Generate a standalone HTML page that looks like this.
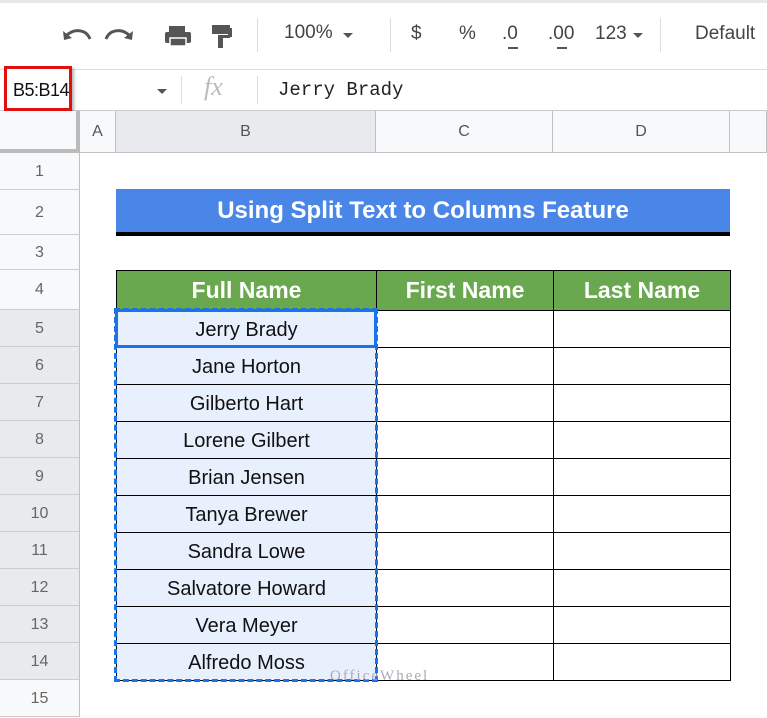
<!DOCTYPE html>
<html><head><style>
*{margin:0;padding:0;box-sizing:border-box}
body{width:767px;height:718px;background:#fff;position:relative;overflow:hidden;font-family:"Liberation Sans",Arial,sans-serif}
.a{position:absolute}
.tb{color:#444;font-size:19px}
.rh{position:absolute;left:0;width:80px;background:#f8f9fa;border-bottom:1px solid #ccc;border-right:1px solid #c0c0c0;color:#666;font-size:16px;text-align:center}
.ch{position:absolute;top:111px;height:42px;background:#f8f9fa;border-right:1px solid #c0c0c0;border-bottom:1px solid #c0c0c0;color:#555;font-size:16px;text-align:center;line-height:42px}
.cell{position:absolute;border:1px solid #000;font-size:20px;text-align:center;color:#111}
</style></head><body>
<div class="a" style="left:0;top:0;width:767px;height:3px;background:#e8e8e8"></div>
<svg class="a" style="left:60px;top:22px" width="180" height="28" viewBox="0 0 180 28">
<path d="M6 14 Q14 6 24 10 Q28 12 30 17" stroke="#555" stroke-width="3" fill="none"/><path d="M3 9 L4 18 L12 16 Z" fill="#555"/>
<path d="M70 14 Q62 6 52 10 Q48 12 46 17" stroke="#555" stroke-width="3" fill="none"/><path d="M73 9 L72 18 L64 16 Z" fill="#555"/>
<rect x="109" y="4" width="16" height="6" fill="#555"/><rect x="105" y="10" width="26" height="11" rx="2" fill="#555"/><rect x="110" y="16" width="16" height="8" fill="#555" stroke="#fff" stroke-width="1.5"/>
<rect x="152" y="3" width="18" height="9" fill="#555"/><rect x="168" y="6" width="4" height="9" fill="#555"/><rect x="158" y="13" width="12" height="3" fill="#555"/><rect x="158" y="15" width="5" height="11" fill="#555"/>
</svg>
<div class="a" style="left:257px;top:18px;width:1px;height:34px;background:#ddd"></div>
<div class="a tb" style="left:284px;top:22px">100%</div>
<div class="a" style="left:243px;top:33px"></div>
<div class="a" style="left:243px;top:33px"></div>
<div class="a" style="left:243px;top:33px"></div>
<div class="a" style="left:243px;top:33px"></div>
<div class="a" style="left:343px;top:33px;border:5px solid transparent;border-top:5px solid #555"></div>
<div class="a" style="left:390px;top:18px;width:1px;height:34px;background:#ddd"></div>
<div class="a tb" style="left:411px;top:23px">$</div>
<div class="a tb" style="left:459px;top:23px">%</div>
<div class="a tb" style="left:502px;top:23px">.0</div>
<div class="a" style="left:508px;top:47px;width:10px;height:2px;background:#555"></div>
<div class="a tb" style="left:548px;top:23px">.00</div>
<div class="a" style="left:557px;top:47px;width:10px;height:2px;background:#555"></div>
<div class="a tb" style="left:595px;top:23px">123</div>
<div class="a" style="left:633px;top:33px;border:5px solid transparent;border-top:5px solid #555"></div>
<div class="a" style="left:660px;top:18px;width:1px;height:34px;background:#ddd"></div>
<div class="a tb" style="left:695px;top:23px">Default</div>
<div class="a" style="left:0;top:69px;width:767px;height:1px;background:#ddd"></div>
<div class="a" style="left:0;top:110px;width:767px;height:1px;background:#ccc"></div>
<div class="a" style="left:4px;top:66px;width:68px;height:45px;border:3px solid #e01010;box-shadow:2px 2px 3px rgba(0,0,0,.3);background:#fff"></div>
<div class="a" style="left:13px;top:80px;font-size:18px;color:#111;letter-spacing:-0.5px">B5:B14</div>
<div class="a" style="left:157px;top:89px;border:5px solid transparent;border-top:5px solid #555"></div>
<div class="a" style="left:181px;top:76px;width:1px;height:28px;background:#ddd"></div>
<div class="a" style="left:204px;top:72px;font-family:'Liberation Serif',serif;font-style:italic;font-size:26px;color:#bbb">fx</div>
<div class="a" style="left:257px;top:76px;width:1px;height:28px;background:#ddd"></div>
<div class="a" style="left:278px;top:79px;font-family:'Liberation Mono',monospace;font-size:19px;color:#222">Jerry Brady</div>
<div class="a" style="left:0;top:111px;width:80px;height:42px;background:#f8f9fa;border-right:4px solid #bbb;border-bottom:4px solid #bbb"></div>
<div class="ch" style="left:80px;width:36px">A</div>
<div class="ch" style="left:116px;width:260px;background:#e8eaed">B</div>
<div class="ch" style="left:376px;width:177px">C</div>
<div class="ch" style="left:553px;width:177px">D</div>
<div class="ch" style="left:730px;width:37px"></div>
<div class="rh" style="top:153px;height:37px;line-height:37px">1</div>
<div class="rh" style="top:190px;height:45px;line-height:45px">2</div>
<div class="rh" style="top:235px;height:35px;line-height:35px">3</div>
<div class="rh" style="top:270px;height:40px;line-height:40px">4</div>
<div class="rh" style="top:310px;height:37px;line-height:37px;background:#e8eaed">5</div>
<div class="rh" style="top:347px;height:37px;line-height:37px;background:#e8eaed">6</div>
<div class="rh" style="top:384px;height:37px;line-height:37px;background:#e8eaed">7</div>
<div class="rh" style="top:421px;height:37px;line-height:37px;background:#e8eaed">8</div>
<div class="rh" style="top:458px;height:37px;line-height:37px;background:#e8eaed">9</div>
<div class="rh" style="top:495px;height:37px;line-height:37px;background:#e8eaed">10</div>
<div class="rh" style="top:532px;height:37px;line-height:37px;background:#e8eaed">11</div>
<div class="rh" style="top:569px;height:37px;line-height:37px;background:#e8eaed">12</div>
<div class="rh" style="top:606px;height:37px;line-height:37px;background:#e8eaed">13</div>
<div class="rh" style="top:643px;height:37px;line-height:37px;background:#e8eaed">14</div>
<div class="rh" style="top:680px;height:37px;line-height:37px">15</div>
<div class="a" style="left:116px;top:189px;width:614px;height:47px;background:#4a86e8;border-bottom:4px solid #000;color:#fff;font-weight:bold;font-size:24px;text-align:center;line-height:43px">Using Split Text to Columns Feature</div>
<div class="cell" style="left:116px;top:270px;width:261px;height:41px;background:#6aa84f;color:#fff;font-weight:bold;font-size:23px;line-height:39px">Full Name</div>
<div class="cell" style="left:376px;top:270px;width:178px;height:41px;background:#6aa84f;color:#fff;font-weight:bold;font-size:23px;line-height:39px">First Name</div>
<div class="cell" style="left:553px;top:270px;width:178px;height:41px;background:#6aa84f;color:#fff;font-weight:bold;font-size:23px;line-height:39px">Last Name</div>
<div id="rows"></div>
<script>
var n=["Jerry Brady","Jane Horton","Gilberto Hart","Lorene Gilbert","Brian Jensen","Tanya Brewer","Sandra Lowe","Salvatore Howard","Vera Meyer","Alfredo Moss"],h="";
for(var i=0;i<10;i++){var t=310+i*37;
h+='<div class="cell" style="left:116px;top:'+t+'px;width:261px;height:38px;background:#e8f0fd;line-height:39px">'+n[i]+'</div>';
h+='<div class="cell" style="left:376px;top:'+t+'px;width:178px;height:38px"></div>';
h+='<div class="cell" style="left:553px;top:'+t+'px;width:178px;height:38px"></div>';}
document.getElementById("rows").innerHTML=h;
</script>
<div class="a" style="left:115px;top:309px;width:262px;height:39px;border:3px solid #1a73e8"></div>
<div class="a" style="left:114px;top:308px;width:264px;height:374px;border:3px dashed #1a73e8"></div>
<div class="a" style="left:330px;top:668px;font-family:'Liberation Serif',serif;font-size:15px;color:#aab;letter-spacing:2px">OfficeWheel</div>
</body></html>
